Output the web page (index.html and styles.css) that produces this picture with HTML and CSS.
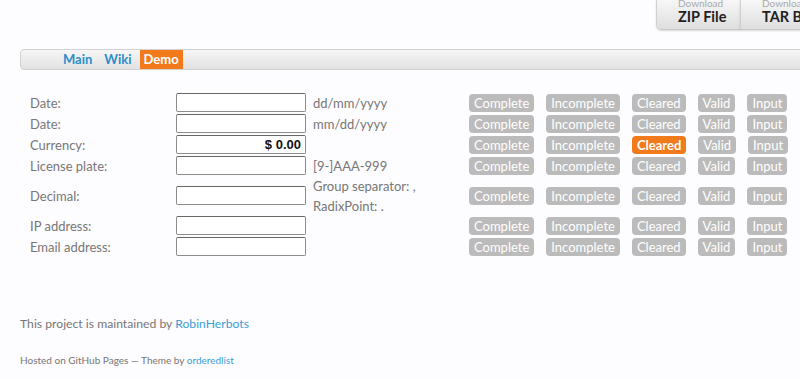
FILE: index.html
```html
<!DOCTYPE html>
<html lang="en">
<head>
    <meta charset="UTF-8">
    <title>Inputmask Demo</title>
    <link rel="stylesheet" href="styles.css">
</head>
<body>

    <header class="top">
        <div class="downloads">
            <a class="dl" href="#"><span class="dl-small">Download</span><strong>ZIP File</strong></a>
            <a class="dl" href="#"><span class="dl-small">Download</span><strong>TAR Ball</strong></a>
        </div>
    </header>

    <nav class="menu">
        <a href="#">Main</a>
        <a href="#">Wiki</a>
        <a href="#" class="active">Demo</a>
    </nav>

    <section class="demo">
        <div class="row">
            <label>Date:</label>
            <input type="text">
            <span class="hint">dd/mm/yyyy</span>
            <div class="badges"><span class="badge">Complete</span><span class="badge">Incomplete</span><span class="badge">Cleared</span><span class="badge">Valid</span><span class="badge">Input</span></div>
        </div>
        <div class="row">
            <label>Date:</label>
            <input type="text">
            <span class="hint">mm/dd/yyyy</span>
            <div class="badges"><span class="badge">Complete</span><span class="badge">Incomplete</span><span class="badge">Cleared</span><span class="badge">Valid</span><span class="badge">Input</span></div>
        </div>
        <div class="row">
            <label>Currency:</label>
            <input type="text" class="money" value="$ 0.00">
            <span class="hint"></span>
            <div class="badges"><span class="badge">Complete</span><span class="badge">Incomplete</span><span class="badge on">Cleared</span><span class="badge">Valid</span><span class="badge">Input</span></div>
        </div>
        <div class="row">
            <label>License plate:</label>
            <input type="text">
            <span class="hint">[9-]AAA-999</span>
            <div class="badges"><span class="badge">Complete</span><span class="badge">Incomplete</span><span class="badge">Cleared</span><span class="badge">Valid</span><span class="badge">Input</span></div>
        </div>
        <div class="row tall">
            <label>Decimal:</label>
            <input type="text">
            <span class="hint">Group separator: ,<br>RadixPoint: .</span>
            <div class="badges"><span class="badge">Complete</span><span class="badge">Incomplete</span><span class="badge">Cleared</span><span class="badge">Valid</span><span class="badge">Input</span></div>
        </div>
        <div class="row">
            <label>IP address:</label>
            <input type="text">
            <span class="hint"></span>
            <div class="badges"><span class="badge">Complete</span><span class="badge">Incomplete</span><span class="badge">Cleared</span><span class="badge">Valid</span><span class="badge">Input</span></div>
        </div>
        <div class="row">
            <label>Email address:</label>
            <input type="text">
            <span class="hint"></span>
            <div class="badges"><span class="badge">Complete</span><span class="badge">Incomplete</span><span class="badge">Cleared</span><span class="badge">Valid</span><span class="badge">Input</span></div>
        </div>
    </section>

    <footer class="foot">
        <p class="owner">This project is maintained by <a href="#">RobinHerbots</a></p>
        <p class="hosted">Hosted on GitHub Pages &mdash; Theme by <a href="#">orderedlist</a></p>
    </footer>

</body>
</html>
```

FILE: styles.css
```css
html, body { overflow-x: hidden; }
body { margin: 0; font-family: Lato, "Open Sans", sans-serif; color: #777; background: #fdfcfe; font-size: 13px; }
a { text-decoration: none; }

.top { height: 30px; }
.downloads { display: flex; margin-left: 656px; width: 200px; }
.dl {
    display: flex; flex-direction: column;
    width: 84px; height: 30px; box-sizing: border-box;
    padding: 0 0 0 21px;
    background: linear-gradient(#f7f7f7, #dedede);
    border-left: 1px solid #d0d0d0; border-bottom: 1px solid #c8c8c8;
    box-shadow: 0 1px 2px rgba(0, 0, 0, 0.15);
    color: #222;
}
.dl:first-child { border-bottom-left-radius: 5px; }
.dl-small { font-size: 10px; color: #aaa; line-height: 10px; margin-top: -2px; }
.dl strong { font-size: 14.5px; line-height: 17px; }

.menu {
    display: flex; gap: 4px; align-items: center;
    margin: 19px 0 0 20px; width: 820px; height: 21px;
    box-sizing: border-box; padding-left: 38px;
    background: linear-gradient(#f6f6f6, #e2e2e2);
    border: 1px solid #d2d2d2; border-radius: 4px;
}
.menu a { padding: 0 4px; line-height: 19px; font-weight: bold; color: #2e8ccb; font-size: 13px; }
.menu a.active { background: #f27a1a; color: #fff; }

.demo { margin: 22px 0 0 30px; }
.row { display: flex; align-items: center; height: 21px; }
.row.tall { height: 39px; }
.row label { width: 146px; }
.row input {
    width: 130px; height: 19px; box-sizing: border-box; margin: 0;
    border: 1px solid #8c8c8c; border-top-color: #666; border-radius: 2px;
    background: #fff; padding: 0 4px;
}
.money { text-align: right; font-family: "Liberation Sans", Arial, sans-serif; font-weight: bold; color: #111; font-size: 13px; }
.hint { width: 156px; padding-left: 7px; line-height: 20px; }
.badges { display: flex; gap: 12px; }
.badge {
    background: #bbb; color: #fff; border-radius: 4px;
    padding: 0 5px; line-height: 18px; font-size: 13px;
}
.badge.on { background: #f07a1c; font-weight: bold; }

.foot { margin: 57px 0 0 20px; }
.owner { margin: 0; font-size: 12.2px; line-height: 20px; }
.owner a { color: #3a9ed8; }
.hosted { margin: 20px 0 0; font-size: 10px; }
.hosted a { color: #3a9ed8; }
```
